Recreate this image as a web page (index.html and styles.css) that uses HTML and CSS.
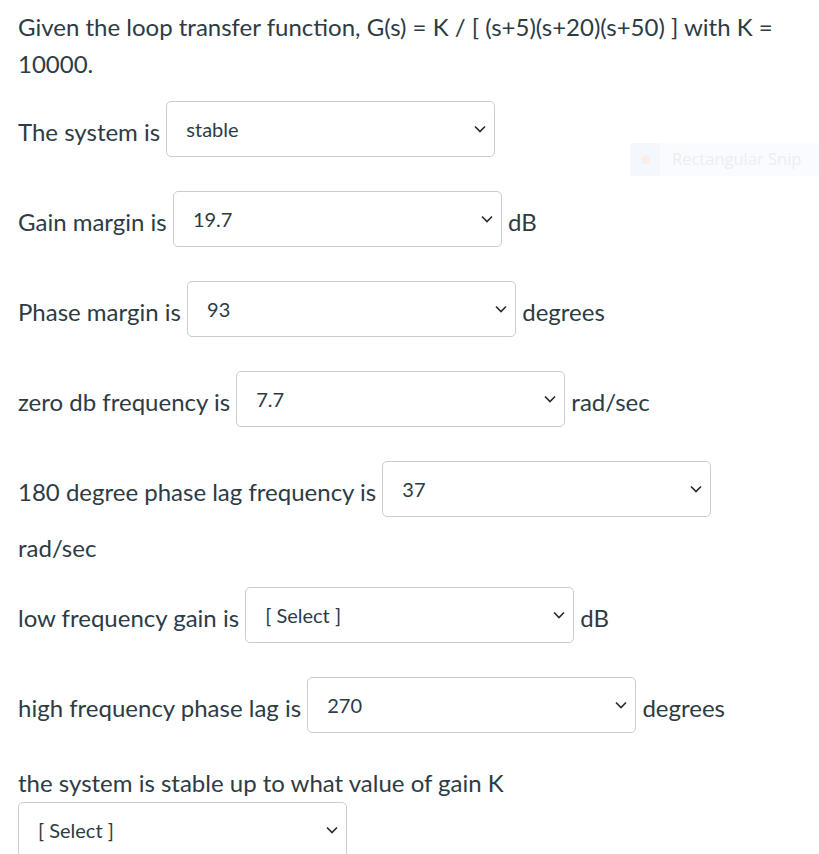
FILE: index.html
```html
<!DOCTYPE html>
<html lang="en">
<head>
  <meta charset="UTF-8"/>
  <title>Quiz question</title>
  <link rel="stylesheet" href="styles.css">
</head>
<body>
  <div class="question">
    <p class="intro">Given the loop transfer function, G(s) = K / [ (s+5)(s+20)(s+50) ] with K = 10000.</p>

    <p>The system is <span class="pick"><select><option>stable</option></select><svg viewBox="0 0 12 8"><path d="M1 1.5l5 5 5-5"/></svg></span></p>

    <p>Gain margin is <span class="pick"><select><option>19.7</option></select><svg viewBox="0 0 12 8"><path d="M1 1.5l5 5 5-5"/></svg></span> dB</p>

    <p>Phase margin is <span class="pick"><select><option>93</option></select><svg viewBox="0 0 12 8"><path d="M1 1.5l5 5 5-5"/></svg></span> degrees</p>

    <p>zero db frequency is <span class="pick"><select><option>7.7</option></select><svg viewBox="0 0 12 8"><path d="M1 1.5l5 5 5-5"/></svg></span> rad/sec</p>

    <p class="wrapped">180 degree phase lag frequency is <span class="pick"><select><option>37</option></select><svg viewBox="0 0 12 8"><path d="M1 1.5l5 5 5-5"/></svg></span> rad/sec</p>

    <p>low frequency gain is <span class="pick"><select><option>[ Select ]</option></select><svg viewBox="0 0 12 8"><path d="M1 1.5l5 5 5-5"/></svg></span> dB</p>

    <p>high frequency phase lag is <span class="pick"><select><option>270</option></select><svg viewBox="0 0 12 8"><path d="M1 1.5l5 5 5-5"/></svg></span> degrees</p>

    <p class="last">the system is stable up to what value of gain K<br><span class="pick"><select><option>[ Select ]</option></select><svg viewBox="0 0 12 8"><path d="M1 1.5l5 5 5-5"/></svg></span></p>
  </div>

  <!-- leftover snipping tool toolbar -->
  <div class="snip">
    <span class="snip-icon"><span class="dot"></span></span>
    <span class="snip-label">Rectangular Snip</span>
  </div>
</body>
</html>
```

FILE: styles.css
```css
:root {
  --text: #2d3b45;
  --border: #c7cdd1;
}

* {
  box-sizing: border-box;
}

body {
  margin: 0;
  padding: 0 18px;
  background: #fff;
  color: var(--text);
  font-family: Lato, "Open Sans", sans-serif;
  font-size: 24px;
  line-height: 37px;
}

.question {
  max-width: 760px;
  padding-top: 8px;
}

p {
  margin: 0 0 22px;
}

p.intro {
  margin-bottom: 19px;
}

p.wrapped {
  margin-bottom: 21px;
}

p.last {
  margin-top: -3px;
}

.pick {
  position: relative;
  display: inline-block;
  vertical-align: middle;
  margin-bottom: 12px;
}

.pick select {
  appearance: none;
  -webkit-appearance: none;
  width: 329px;
  height: 56px;
  padding: 0 36px 0 19px;
  border: 1px solid var(--border);
  border-radius: 5px;
  background: #fff;
  color: var(--text);
  font-family: Lato, "Open Sans", sans-serif;
  font-size: 20px;
  display: block;
}

.pick svg {
  position: absolute;
  right: 9px;
  top: 24px;
  width: 12px;
  height: 8px;
  fill: none;
  stroke: #2d2d2d;
  stroke-width: 1.7;
  pointer-events: none;
}

.last .pick {
  margin-top: 1px;
}

.snip {
  position: absolute;
  left: 630px;
  top: 143px;
  width: 189px;
  height: 33px;
  display: flex;
  align-items: center;
  background: #f9fbfe;
  font-family: "Open Sans", sans-serif;
  font-size: 16.5px;
  line-height: 1;
}

.snip-icon {
  width: 30px;
  height: 100%;
  background: #f4f8fd;
  display: flex;
  align-items: center;
  justify-content: center;
}

.dot {
  width: 9px;
  height: 9px;
  border-radius: 50%;
  background: #fbeee8;
}

.snip-label {
  margin-left: 12px;
  color: #eceef1;
}
```
